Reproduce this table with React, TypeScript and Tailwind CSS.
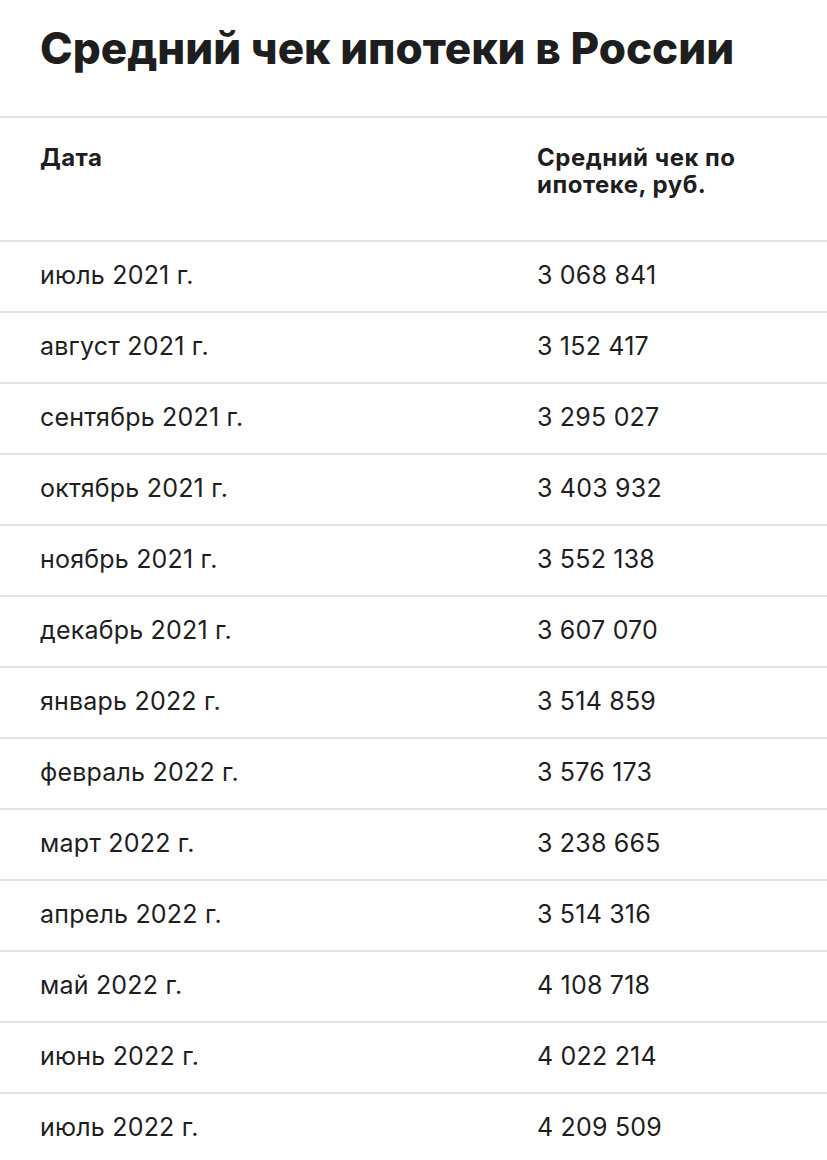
import React from "react";

const rows: [string, string][] = [
  ["июль 2021 г.", "3 068 841"],
  ["август 2021 г.", "3 152 417"],
  ["сентябрь 2021 г.", "3 295 027"],
  ["октябрь 2021 г.", "3 403 932"],
  ["ноябрь 2021 г.", "3 552 138"],
  ["декабрь 2021 г.", "3 607 070"],
  ["январь 2022 г.", "3 514 859"],
  ["февраль 2022 г.", "3 576 173"],
  ["март 2022 г.", "3 238 665"],
  ["апрель 2022 г.", "3 514 316"],
  ["май 2022 г.", "4 108 718"],
  ["июнь 2022 г.", "4 022 214"],
  ["июль 2022 г.", "4 209 509"],
];

export default function App() {
  return (
    <div className="w-[827px] h-[1160px] overflow-hidden bg-white text-[#1e1e1e] font-['Inter',sans-serif]">
      <h1 className="pl-[40px] pt-[22px] h-[116px] text-[44px] leading-[52px] font-extrabold">
        Средний чек ипотеки в России
      </h1>
      <div className="border-t-2 border-[#e2e2e2] h-[124px] flex">
        <div className="w-[497px] ml-[40px] pt-[26px] text-[24px] leading-[28px] font-bold tracking-[0.4px]">Дата</div>
        <div className="pt-[26px] flex flex-col text-[24px] leading-[27px] font-bold tracking-[0.5px] w-[250px]">
          <span>Средний чек по</span>
          <span>ипотеке, руб.</span>
        </div>
      </div>
      {rows.map(([d, v]) => (
        <div key={d} className="border-t-2 border-[#e2e2e2] h-[71px] pb-[4px] flex items-center text-[25px] leading-[30px] tracking-[0.2px]">
          <div className="w-[497px] ml-[40px]">{d}</div>
          <div>{v}</div>
        </div>
      ))}
    </div>
  );
}
